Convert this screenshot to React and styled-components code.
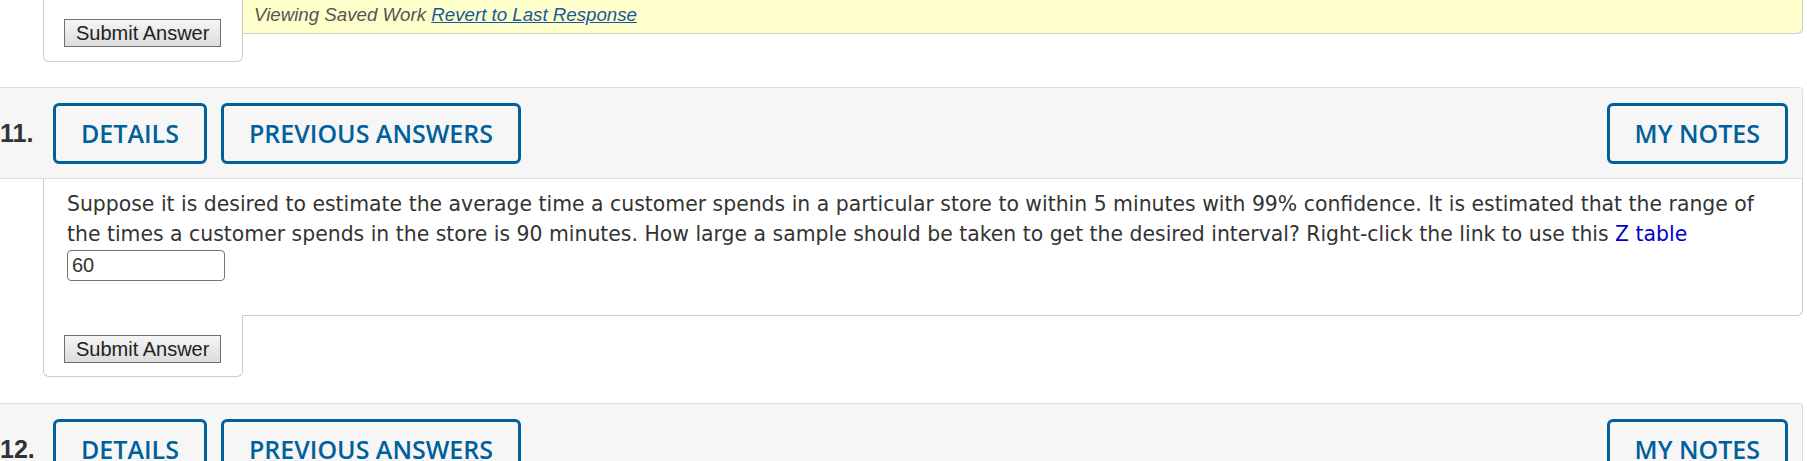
import React from 'react';
import styled, { createGlobalStyle } from 'styled-components';

const GlobalStyle = createGlobalStyle`
  html, body {
    margin: 0;
    padding: 0;
    background: #ffffff;
    overflow: hidden;
  }
`;

const Page = styled.div`
  width: 1803px;
`;

const TailRow = styled.div`
  display: flex;
  align-items: flex-start;
`;

const SubmitTab = styled.div`
  position: relative;
  width: 200px;
  box-sizing: border-box;
  margin-left: 43px;
  margin-top: ${props => props.$overlap ? '-1px' : '0'};
  padding: ${props => props.$overlap ? '20px 0 13px 20px' : '19px 0 14px 20px'};
  background: #ffffff;
  border: 1px solid #cccccc;
  border-top: none;
  border-radius: 0 0 6px 6px;
`;

const SubmitButton = styled.button`
  display: block;
  height: 28px;
  padding: 0 11px;
  border: 1px solid #707070;
  border-radius: 0;
  background: linear-gradient(#f5f5f5, #dcdcdc);
  color: #222222;
  font-family: "Liberation Sans", Arial, sans-serif;
  font-size: 20px;
  line-height: 26px;
  cursor: pointer;
`;

const Banner = styled.div`
  flex: 1;
  height: 34px;
  box-sizing: border-box;
  padding-left: 11px;
  background: #ffffcc;
  border: 1px solid #cccccc;
  border-top: none;
  border-left: none;
  border-radius: 0 0 6px 0;
  font-family: "Liberation Sans", Arial, sans-serif;
  font-style: italic;
  font-size: 18.7px;
  line-height: 30px;
  color: #555555;

  a {
    color: #17599a;
    text-decoration: underline;
  }
`;

const Question = styled.section`
  margin-top: ${props => props.$gap}px;
`;

const Header = styled.div`
  display: flex;
  align-items: center;
  gap: 14px;
  height: 92px;
  box-sizing: border-box;
  padding: 0 14px 0 0;
  background: #f6f6f6;
  border: 1px solid #dddddd;
  border-left: none;
  border-radius: 0 4px 0 0;
`;

const Number = styled.div`
  width: 39px;
  box-sizing: border-box;
  padding-right: 7px;
  text-align: right;
  font-family: "Liberation Sans", Arial, sans-serif;
  font-weight: bold;
  font-size: 25px;
  color: #333333;
`;

const ActionButton = styled.button`
  height: 61px;
  box-sizing: border-box;
  padding: 0 25px;
  margin-left: ${props => props.$right ? 'auto' : '0'};
  border: 3px solid #00609b;
  border-radius: 6px;
  background: transparent;
  color: #00609b;
  font-family: "Open Sans", sans-serif;
  font-weight: 600;
  font-size: 25px;
  text-transform: uppercase;
  cursor: pointer;
`;

const Body = styled.div`
  margin-left: 43px;
  padding: 10px 23px 34px;
  background: #ffffff;
  border: 1px solid #cccccc;
  border-top: none;
  border-radius: 0 0 6px 0;
  font-family: "DejaVu Sans", Verdana, sans-serif;
  font-size: 20.4px;
  line-height: 30px;
  color: #333333;

  a {
    color: #0000cc;
    text-decoration: none;
  }
`;

const AnswerInput = styled.input`
  display: block;
  width: 158px;
  height: 31px;
  box-sizing: border-box;
  margin-top: 1px;
  padding: 0 4px;
  border: 1px solid #767676;
  border-radius: 4px;
  font-family: "Liberation Sans", Arial, sans-serif;
  font-size: 20px;
  color: #333333;
`;

const QuestionHeader = ({ number }) => (
  <Header>
    <Number>{number}.</Number>
    <ActionButton>Details</ActionButton>
    <ActionButton>Previous Answers</ActionButton>
    <ActionButton $right>My Notes</ActionButton>
  </Header>
);

const App = () => (
  <>
    <GlobalStyle />
    <Page>
      <TailRow>
        <SubmitTab>
          <SubmitButton>Submit Answer</SubmitButton>
        </SubmitTab>
        <Banner>
          Viewing Saved Work <a href="#revert">Revert to Last Response</a>
        </Banner>
      </TailRow>

      <Question $gap={25}>
        <QuestionHeader number={11} />
        <Body>
          Suppose it is desired to estimate the average time a customer spends in a particular store to within 5 minutes
          with 99% confidence. It is estimated that the range of the times a customer spends in the store is 90 minutes.
          How large a sample should be taken to get the desired interval? Right-click the link to use this{' '}
          <a href="#ztable">Z table</a>
          <AnswerInput defaultValue="60" />
        </Body>
        <SubmitTab $overlap>
          <SubmitButton>Submit Answer</SubmitButton>
        </SubmitTab>
      </Question>

      <Question $gap={26}>
        <QuestionHeader number={12} />
      </Question>
    </Page>
  </>
);

export default App;
